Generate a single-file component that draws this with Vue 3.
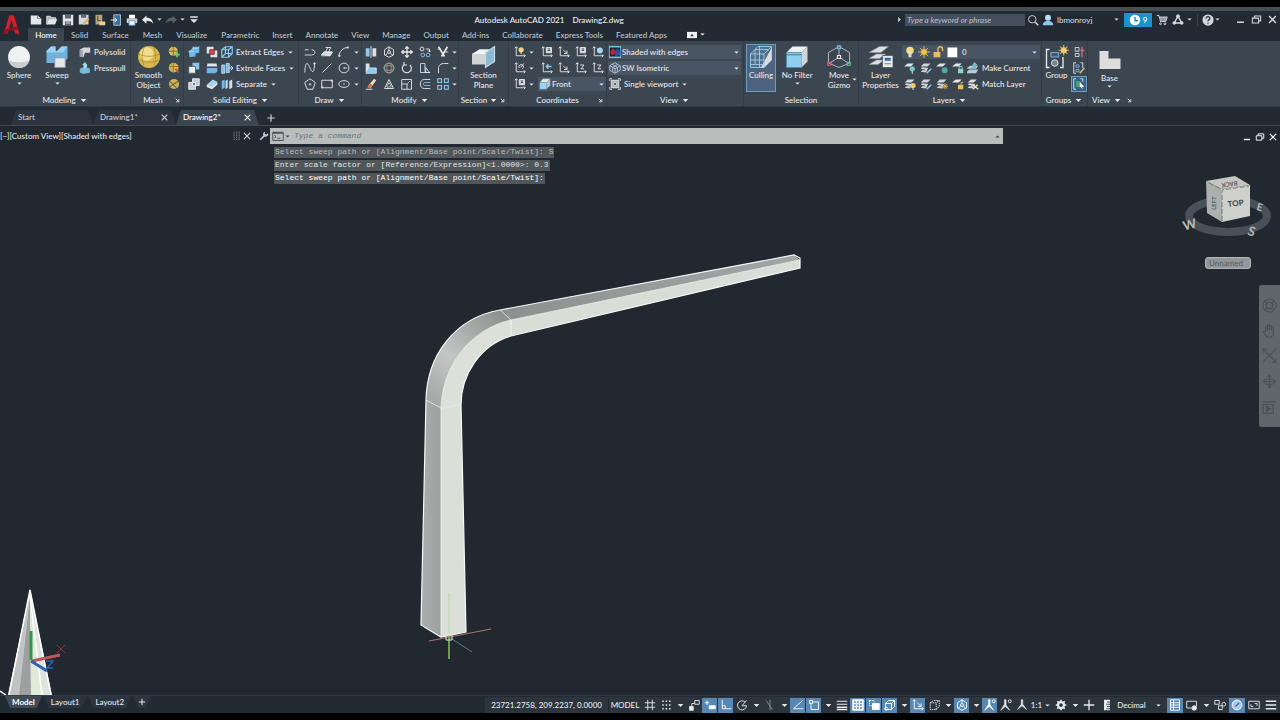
<script setup>
import { h } from 'vue'

const icons = {
  logo: '<path d="M2 15 6.4 1h3.4L14 15h-3.2L8 4.6 5 15z" fill="#d3202f" stroke="none"/><path d="M2 15 3 12 12 9.4l1 2.4-8 1.4L4.4 15z" fill="#8f1420" stroke="none"/>',
  newfile: '<path d="M1 2h9l5 4v8H1z" fill="#e4e7ea" stroke="none"/><path d="M10 2v4h5" stroke="#75808c"/>',
  open: '<path d="M1 14V3h5l1 2h6v2" fill="#aab2bb" stroke="#e4e7ea"/><path d="M1 14 4 7h11l-3 7z" fill="#e4e7ea" stroke="none"/>',
  save: '<path d="M1 1h14v14H1z" fill="#dfe3e7" stroke="none"/><path d="M4 1h8v5H4zM4 10h8v5H4z" fill="#5b6673" stroke="none"/><path d="M5.500 12h5"/>',
  saveas: '<path d="M1 1h13v13H1z" fill="#d2d7dc" stroke="none"/><path d="M4 1h7v4H4z" fill="#5b6673" stroke="none"/><path d="M7 14 14 6" stroke="#e0b15b" stroke-width="2.600"/>',
  webopen: '<path d="M2 1h9v13H2z" fill="#b9a77e" stroke="none"/><path d="M5 3v6h4" stroke="#3d3a33"/><path d="M7 10h8v5H7z" fill="#e9d092" stroke="none"/>',
  mobile: '<path d="M5 1h9v14H5z" fill="#3d6f99" stroke="#a9c6dc"/><path d="M1 8h8M6 5l3 3-3 3" stroke="#fff"/>',
  print: '<path d="M4 1h8v5H4z" fill="#fff" stroke="none"/><path d="M1 6h14v6H1z" fill="#cfd5da" stroke="none"/><path d="M4 9h8v6H4z" fill="#fff" stroke="#4f8fbf"/>',
  undo: '<path d="M6 2v3c5 0 8 2 9 8-2-3-5-4-9-4v4L0 7.500z" fill="currentColor" stroke="none"/>',
  redo: '<path d="M10 2v3c-5 0-8 2-9 8 2-3 5-4 9-4v4l6-5.500z" fill="#56616b" stroke="none"/>',
  custom: '<path d="M3 4h10" stroke-width="2"/><path d="m3 7 5 5 5-5z" fill="currentColor" stroke="none"/>',
  caret: '<path d="m3 5.500 5 5 5-5z" fill="currentColor" stroke="none"/>',
  right: '<path d="m5 2 6 6-6 6z" fill="currentColor" stroke="none"/>',
  launch: '<path d="m4 4 6 6M11 5v6H5" stroke-width="2"/>',
  search: '<circle cx="7" cy="7" r="5"/><path d="m11 11 4 4" stroke-width="2"/>',
  user: '<circle cx="8" cy="5" r="4" fill="#b9def5" stroke="none"/><path d="M1 15c0-8 14-8 14 0z" fill="#8dc4ea" stroke="none"/>',
  clock: '<circle cx="8" cy="8" r="7" fill="#fff" stroke="none"/><path d="M8 4v5h4" stroke="#1c8fc9" stroke-width="2"/>',
  cart: '<path d="M1 2h3l2 8h7l2-6H5" fill="#8f99a3"/><circle cx="6" cy="13" r="1.200"/><circle cx="12" cy="13" r="1.200"/>',
  share: '<path d="M8 3 3 12h10z" stroke-width="2"/><circle cx="8" cy="3" r="2" fill="currentColor"/><circle cx="3" cy="12" r="1.800" fill="currentColor"/><circle cx="13" cy="12" r="1.800" fill="currentColor"/>',
  help: '<circle cx="8" cy="8" r="7.500" fill="#d3d8dc" stroke="none"/><path d="M5.500 6c0-3.600 5-3.200 5-.4 0 2-2.500 2-2.500 4M8 11.500v1.500" stroke="#2a333d" stroke-width="1.800"/>',
  min: '<path d="M3 12h10" stroke-width="2.200"/>',
  restore: '<path d="M2 6h9v7H2zM5 6V3h9v7h-3" stroke-width="1.500"/>',
  close: '<path d="m3 3 10 10M13 3 3 13" stroke-width="2"/>',
  sphere: '<circle cx="8" cy="8" r="7.300" fill="#f0f2f2" stroke="none"/><path d="M1 10c2 2 12 2 14 0-1 7-13 7-14 0z" fill="#c9cdcf" stroke="none"/>',
  sweep: '<path d="M1 4 4 1h3v3h1l3-3h4v8l-3 3H1z" fill="#6db3e0" stroke="none"/><path d="m1 4 3-3h3v3h1l3-3h4l-3 4H1z" fill="#9bd0f2" stroke="none"/><path d="M6.500 8.500h7V15h-7z" fill="#e4e7ea" stroke="#8793a0" stroke-width=".6"/>',
  polysolid: '<path d="M1 14V5l5-3h9v7H8l-2 6z" fill="#d3d7da" stroke="none"/><path d="M1 14V5l4 1v9z" fill="#9aa3ac" stroke="none"/>',
  presspull: '<path d="m1 9 5-2 8 1 1 6-9 2-5-2z" fill="#79b9d8" stroke="none"/><path d="M6 8V4L4 4l4-4 3 4-1 4z" fill="#a4dced" stroke="none"/>',
  mesh: '<circle cx="8" cy="8" r="7.300" fill="#d9ba50" stroke="none"/><circle cx="6.500" cy="6" r="4.500" fill="#f1dd8a" stroke="none"/><path d="M1 6c4 2 10 2 14 0M1 10c5 2 9 2 14 0M5 1c-2 5-2 9 0 14M11 1c2 5 2 9 0 14" stroke="#a98b31" stroke-width=".5"/>',
  meshplus: '<circle cx="7" cy="7" r="6" fill="#d9bd59" stroke="none"/><path d="M1 7h12M7 1v12" stroke="#6f6438"/><path d="M12 8v7M8.500 11.500h7" stroke="#6ad36a" stroke-width="2.200"/>',
  meshminus: '<circle cx="7.500" cy="7.500" r="6.500" fill="#d6b352" stroke="none"/><path d="M2 6h12M7 1v12" stroke="#8a7030"/><path d="m10 9 4 5" stroke="#cc5a2c" stroke-width="2.500"/>',
  meshcrease: '<circle cx="8" cy="8" r="6.800" fill="#cdb25b" stroke="none"/><path d="M2 12 14 4M3 5l8 8" stroke="#6d6140" stroke-width="1.400"/>',
  union: '<path d="M1 7 6 3V1h9v8l-5 1v4l-8 1z" fill="#74b8e8" stroke="none"/><path d="M6 3h7l2-2M1 7h7" stroke="#b7dff7"/>',
  subtract: '<path d="M6 1h9v9H6z" fill="#8cc4ea" stroke="none"/><path d="M1 6h9v9H1z" fill="#eceff1" stroke="#56616d"/>',
  intersect: '<path d="M6 1h9v9H6zM1 6h9v9H1z" fill="#c4cad0" stroke="#eceff1"/><path d="M6 6h4v4H6z" fill="#3f86b9"/>',
  interfere: '<path d="M1 1h9v9H1zM6 6h9v9H6z" fill="#dfe3e6" stroke="none"/><path d="M5 5h6v6H5z" fill="#d54c55" stroke="#8d2430"/>',
  slice: '<path d="M2 2h12l1 4H1z" fill="#dce4ea" stroke="none"/><path d="M1 8h14v5l-3 2H1z" fill="#73b5e3" stroke="none"/>',
  shell: '<path d="m1 9 8-7 6 3-7 8z" fill="#a4d2ef" stroke="none"/><path d="m1 9 7 3v3l-7-3zM8 12l7-7v4l-7 6z" fill="#e1e6ea" stroke="none"/>',
  edges: '<path d="M1 5h9v10H1zM1 5l5-4h9v9l-5 5M10 5l5-4M6 1v9h9M6 10l-5 5" stroke="#8dccf4" stroke-width="1.500"/>',
  extrude: '<path d="M1 4h4v11H1zM7 2h4v12H7z" fill="#79bae7" stroke="#b5dcf5"/><path d="M10 8h6M13 5l3 3-3 3" stroke="#e8edf0"/>',
  separate: '<path d="m1 4 4-2v11l-4 2z" fill="#74b8e8" stroke="none"/><path d="m6 4 3-2v11l-3 2z" fill="#b7dff7" stroke="none"/><path d="m11 4 4-2v11l-4 2z" fill="#d6dde2" stroke="none"/>',
  pline: '<path d="M1 12h9c6 0 6-7 0-7M1 5h5"/>',
  planar: '<path d="m1 11 3-3h11l-3 5H1zM6 8l3-6M6 2h7l-3 6"/><path d="m1 11 3-3h11l-3 5z" fill="#d5dade"/>',
  arc: '<path d="M1 14C2 7 7 2 13 2"/><circle cx="2" cy="13" r="1"/><circle cx="13" cy="2" r="1"/>',
  spline: '<path d="M1 14C2-5 6 3 8 8s6 10 6-7"/><circle cx="14" cy="2" r="1"/>',
  line: '<path d="M2 14 14 2"/>',
  circle: '<circle cx="8" cy="8" r="6.500"/><path d="M8 8h4"/><circle cx="8" cy="8" r=".5"/>',
  polygon: '<path d="m8 1 7 5-3 9H4L1 6z"/><circle cx="8" cy="8.500" r="1"/>',
  rect: '<path d="M1 3h14v10H1z"/><circle cx="1.500" cy="12.500" r="1"/><circle cx="14.500" cy="3.500" r="1"/>',
  ellipse: '<ellipse cx="8" cy="8" rx="7" ry="4.500"/><circle cx="8" cy="8" r=".5"/>',
  mirror: '<path d="M1 3h5v11H1z" fill="#8dc9ee" stroke="none"/><path d="M10 3h5v11h-5z" fill="#dce1e5" stroke="none"/><path d="M8 0v16"/>',
  gizmo: '<path d="m8 1 6 4v7l-6 3-6-3V5z"/><circle cx="8" cy="8" r="2"/><path d="M8 1v5M3 12l3-2M13 12l-3-2"/>',
  move: '<path d="M8 1v14M1 8h14M5.500 3.500 8 1l2.500 2.500M5.500 12.500 8 15l2.500-2.500M3.500 5.500 1 8l2.500 2.500M12.500 5.500 15 8l-2.500 2.500" stroke-width="1.700"/>',
  copy: '<circle cx="4" cy="4" r="2.500"/><path d="M9 4h5v4M12 6l2 2 2-2"/><circle cx="5" cy="12" r="2.500" stroke="#8cc4ea"/><circle cx="12" cy="12" r="2.500" stroke="#8cc4ea"/>',
  trim: '<path d="m2 1 8 13M14 1 6 14" stroke-width="2.200"/><path d="M1 4h4M10 8h5"/>',
  align: '<path d="M1 2h5v12H1z" fill="#dfe3e7" stroke="none"/><path d="M5 8h10v7H1" fill="#8dc9ee" stroke="#cde6f5"/>',
  rotate3d: '<circle cx="8" cy="8" r="6.500" stroke="#b6c8bf"/><ellipse cx="8" cy="8" rx="3" ry="6.500" stroke="#c77"/><ellipse cx="8" cy="8" rx="6.500" ry="3" stroke="#7ba886"/>',
  rotate: '<path d="M5 3A6 6 0 1 0 12 4M4 0v4h4" stroke-width="1.500"/>',
  stretch: '<path d="M2 2h6v12H2zM8 6l6 8H2" stroke="#c5d8e4"/><path d="M9 8v6h6"/>',
  fillet: '<path d="M2 15V9c0-5 3-7 8-7h5"/>',
  erase: '<path d="m4 11 8-10 3 2-8 11z" fill="#f1dfbf" stroke="none"/><path d="m3 12 4-5 3 3-4 4z" fill="#d9703d" stroke="none"/><path d="M1 15h9"/>',
  scale3d: '<path d="m8 2 6 12H2z"/><path d="m8 6 3 6H5z" stroke="#b5c8be"/>',
  scale: '<path d="M1 2h13v13H1zM1 8h7v7"/><path d="m8 8 4-4" stroke="#8cc4ea"/>',
  offset: '<path d="M15 2H7c-7 0-7 12 0 12h8"/><path d="M15 6H8c-3 0-3 4 0 4h7" stroke="#8cc4ea"/>',
  array: '<path d="M1 1h5v5H1zM10 1h5v5h-5zM1 10h5v5H1zM10 10h5v5h-5z" stroke="#8dc9ee" stroke-width="1.500"/>',
  section: '<path d="M0 6 5 3h6v10H0z" fill="#d0d4d7" stroke="none"/><path d="m0 6 5-3h7l-3 3z" fill="#f2f4f5" stroke="none"/><path d="M9 5 15 1v10l-6 4z" fill="#8bb9d2" stroke="#c3dbe8" stroke-width=".8"/>',
  ucs: '<path d="M3 1v12h12M1 3l2-2 2 2M13 11l2 2-2 2"/>',
  ucstilt: '<path d="M3 1v12h12M1 3l2-2 2 2M13 11l2 2-2 2M7 5l5 5M12 6v4H8"/>',
  ucsname: '<path d="M3 1v12h12M1 3l2-2 2 2M13 11l2 2-2 2"/><path d="M7 2h7v7H7z" fill="#cfd5da"/><path d="M9 4h3M9 6h3" stroke="#3b4551"/>',
  ucsworld: '<path d="M3 1v12h12M1 3l2-2 2 2M13 11l2 2-2 2"/><circle cx="10.500" cy="6" r="4" fill="#a8d4ee" stroke="none"/>',
  ucslight: '<path d="M3 1v12h12M1 3l2-2 2 2M13 11l2 2-2 2"/><circle cx="9.500" cy="5" r="3.500" fill="#eed679" stroke="none"/><path d="M9.500 8v3"/>',
  ucsarrow: '<path d="M3 1v12h12M1 3l2-2 2 2M13 11l2 2-2 2"/><path d="M14 6H7m3-3L7 6l3 3" stroke="#8dc9ee" stroke-width="1.800"/>',
  ucsrot: '<path d="M3 1v12h12M1 3l2-2 2 2M13 11l2 2-2 2"/><path d="M7 8a3 3 0 1 1 4 1M13 2l-4 5"/>',
  ucsz: '<path d="M3 1v12h12M1 3l2-2 2 2M13 11l2 2-2 2"/><path d="M7 4h5L8 9h4"/>',
  cube: '<path d="M1 6h9v9H1z" fill="#9cd7f1" stroke="#5c8faa" stroke-width=".6"/><path d="m1 6 4-5h10l-5 5z" fill="#e5eaed" stroke="#5c7b8c" stroke-width=".6"/><path d="m10 6 5-5v9l-5 5z" fill="#b8c2c9" stroke="none"/>',
  shaded: '<path d="M0 1h16v14H0z" fill="#17243a" stroke="#6fc2dd" stroke-width="2"/><path d="M2 9c0-4 4-6 4-6s2 3 2 6-5 5-6 0z" fill="#c3262f" stroke="none"/><path d="m8 6 3-3 4 4v6H8z" fill="#2552a8" stroke="none"/>',
  iso: '<path d="m8 1 7 4v6l-7 4-7-4V5zM1 5l7 4 7-4M8 9v6M4 3l7 4v6M12 3 5 7v6" stroke="#b8cad8"/>',
  viewport: '<path d="M3 3h10v10H3z" fill="#aab2ba"/><path d="M1 4V1h3M12 1h3v3M15 12v3h-3M4 15H1v-3"/><circle cx="8" cy="8" r="2.500" fill="#566170"/>',
  culling: '<path d="m1 6 5-5h9v9l-5 5H1z" fill="#4f718e" stroke="#9fcbea" stroke-width=".6"/><path d="m8 15 7-13v8l-5 5z" fill="#d9dddf" stroke="none"/><path d="M1 6h9V15M10 6l5-5M4 3v10M7 1v14M1 10h9M1 13h8M4 3h9" stroke="#9fcbea" stroke-width=".6"/>',
  nofilter: '<path d="m1 5 4-4h10l-4 4z" fill="#eef1f2" stroke="none"/><path d="M1 5h10v10H1z" fill="#8fd0f0" stroke="#4d88a8" stroke-width=".5"/><path d="m11 5 4-4v10l-4 4z" fill="#d0d5d8" stroke="none"/><path d="M1 6.500h10" stroke="#34657f" stroke-width=".6"/>',
  movegizmo: '<path d="m8 1 7 4v7l-7 3-7-3V5zM8 8V2M8 8l-6 4M8 8l6 4" stroke="#b9c2cb" stroke-width=".6"/><path d="M7 .5h2v2H7z" stroke="#70b9ea" stroke-width=".8"/><path d="M.5 11.500h2v2h-2z" stroke="#df5c6e" stroke-width=".8"/><path d="M13.500 11.500h2v2h-2z" stroke="#59c97c" stroke-width=".8"/><path d="M7 7h2v2H7z" fill="#3c4651" stroke-width=".8"/>',
  layerprops: '<path d="m0 5 7-4h6L8 5zM0 9l5-3h6L7 9zM0 13l5-3h5l-4 3z" fill="#dde0e2" stroke="#8c969f" stroke-width=".4"/><path d="M9 7h7v8H9z" fill="#e8ebed" stroke="#4d5a66" stroke-width=".5"/><path d="M10.500 8.500h4v2h-4z" fill="#356f9d" stroke="none"/><path d="M10.500 12.500h4" stroke="#667380" stroke-width=".6"/>',
  bulb: '<circle cx="8" cy="6" r="5" fill="#f2dc8c" stroke="none"/><path d="M6 10h4v5H6z" fill="#d9dde0" stroke="none"/>',
  sun: '<circle cx="8" cy="8" r="4" fill="#f0c04e" stroke="none"/><path d="M8 0v16M0 8h16M2.500 2.500l11 11M13.500 2.500l-11 11" stroke="#f0c04e"/>',
  unlock: '<path d="M2 8h9v7H2z" fill="#e6bf5a" stroke="none"/><path d="M8 8V4c0-4 6-4 6 0v3" stroke="#e6bf5a" stroke-width="1.800"/>',
  white: '<path d="M2 2h13v13H2z" fill="#fff" stroke="none"/>',
  layerfreeze: '<path d="m0 6 5-4h8L9 6z" fill="#e1e5e8" stroke="none"/><circle cx="11" cy="9" r="3.500" fill="#6fc9c5" stroke="none"/><path d="M11 12v4"/>',
  layeredit: '<path d="m1 6 4-4h9l-4 4zM1 9l2-2 8 1-2 3zM1 13l2-2h7l-2 3z" fill="#cfd5da" stroke="none"/><path d="m9 15 6-6" stroke="#8ec5e6" stroke-width="2"/>',
  layerblue: '<path d="m0 6 5-4h8L9 6z" fill="#e1e5e8" stroke="none"/><circle cx="11.500" cy="11" r="4" fill="#4caaa7" stroke="none"/>',
  layerlock: '<path d="m0 6 5-4h8L9 6z" fill="#e1e5e8" stroke="none"/><path d="M8 9h7v6H8z" fill="#8dd6c6" stroke="none"/><path d="M9.500 9V6h4v3" stroke="#8dd6c6"/>',
  layeryellow: '<path d="m1 6 4-4h9l-4 4zM1 9l2-2 8 1-2 3zM1 13l2-2h7l-2 3z" fill="#cfd5da" stroke="none"/><circle cx="12" cy="10" r="3.500" fill="#f0cb68" stroke="none"/><path d="M12 13v3"/>',
  layersun: '<path d="m1 6 4-4h9l-4 4zM1 9l2-2 8 1-2 3zM1 13l2-2h7l-2 3z" fill="#cfd5da" stroke="none"/><path d="M12 7v8M8 11h8M9 8l6 6M15 8l-6 6" stroke="#f0b94f"/>',
  layerunlock: '<path d="m0 6 5-4h8L9 6z" fill="#e1e5e8" stroke="none"/><path d="M8 9h7v6H8z" fill="#e6bf5a" stroke="none"/><path d="M12 9V6h3" stroke="#e6bf5a"/>',
  current: '<path d="m0 8 4-3h11l-3 4H0zM0 13l3-3h12l-3 5H0z" fill="#b8cdd2" stroke="none"/><path d="M7 9V4L10 0l4 4-2 1v4z" fill="#74bcc9" stroke="none"/>',
  match: '<path d="m1 6 4-4h8l-4 4zM1 9l2-2 8 1-2 3zM1 13l2-2h7l-2 3z" fill="#d9dde0" stroke="none"/><path d="m8 9 7 6M14 9l-6 6" stroke="#e9dfb4" stroke-width="2"/>',
  group: '<path d="M3 3H1v12h2M10 15h2V8" stroke-width=".9"/><path d="M4 5h5v3H4z" fill="#3d5c78" stroke="#78a9cf" stroke-width=".8"/><circle cx="6.500" cy="12" r="2.200" fill="#7a858e" stroke-width=".6"/><path d="M12.500 0v7M9 3.500h7M10 1l5 5M15 1l-5 5" stroke="#f0b955" stroke-width=".7"/><circle cx="12.500" cy="3.500" r="2" fill="#f4cd73" stroke="none"/>',
  ungroup: '<path d="M3 2h5v5H3zM3 10h5v4H3z" stroke="#d5dce2"/><path d="M12 1v14M10 6h5" stroke="#e06b76" stroke-width="1.700"/>',
  groupedit: '<path d="M4 1H1v14h3M10 1h3v7"/><path d="M4 4h4v3H4zM4 10h4v3H4z" stroke="#7fb3da"/><path d="m9 15 6-7" stroke="#e2bc66" stroke-width="2"/>',
  groupsel: '<path d="M4 1H1v14h3M10 1h3v4"/><path d="M4 4h5v8H4z" fill="#3fa772" stroke="none"/><path d="m9 5 6 7h-3l1 3-3-3H9z" fill="#fff" stroke="none"/>',
  base: '<path d="M1 2h6v5h8v7H1z" fill="#dcdddc" stroke="none"/>',
  plus: '<path d="M8 3v10M3 8h10" stroke-width="1.600"/>',
  grip: '<path d="M5 1v14M9 1v14M13 1v14" stroke-dasharray="1.500 1.500"/>',
  wrench: '<path d="m2 14 7-7" stroke-width="2.600"/><path d="M14 3a4 4 0 1 1-4-2L9 4l3 2z" fill="currentColor" stroke="none"/>',
  prompt: '<path d="M1 3h14v11H1z" stroke="#454c50"/><path d="M1 4h14" stroke="#454c50" stroke-width="2"/><path d="m3 7 2.500 2L3 11M7 11h4" stroke="#454c50"/>',
  pill: '<path d="M0 3h16v10H0z" fill="#f0f2f3" stroke="none"/><path d="m5 10 3-4 3 4z" fill="#333d48" stroke="none"/>',
  grid: '<path d="M5 1v14M11 1v14M1 5h14M1 11h14"/>',
  snap: '<path d="M3 3h11M3 8h11M3 13h11" stroke-width="1.800" stroke-dasharray="2 2.500"/>',
  infer: '<path d="M2 10h5v5H2z" fill="currentColor"/><path d="M5 10V6h4M9 2h6v5H9z"/>',
  dyn: '<path d="M1 5h6M4 2v6"/><path d="M7 9h8v4H7z" fill="currentColor"/>',
  ortho: '<path d="M3 1v12h12M3 9h4v4"/>',
  polar: '<path d="M12 4a6 6 0 1 0 2 5H8l6-7"/>',
  isodraft: '<path d="M8 1v14M3 2l8 12" stroke="#87939e"/>',
  track: '<path d="M14 2 2 13h13"/>',
  osnap: '<path d="M4 4h10v10H4z"/><path d="M2 2h4v4H2z" fill="#5f93bf"/>',
  lwt: '<path d="M1 3h14M1 7h14" stroke-width="1.500"/><path d="M1 11h14M1 14h14" stroke-width="2"/>',
  transp: '<path d="M1 1h14v14H1z" fill="#eef4f8"/><path d="M3 4h11M3 8h11M3 12h11" stroke="#46759b" stroke-width="2" stroke-dasharray="2 2"/>',
  cycle: '<path d="M6 6h9v8H6z" fill="#fff"/><path d="M2 2h6v4M2 2v7h4" stroke-dasharray="2 1"/>',
  osnap3d: '<path d="M2 6h8v8H2zM2 6l4-4h8l-4 4M14 2v8l-4 4"/><circle cx="3" cy="13" r="2"/>',
  filter: '<path d="M3 5h8v9H3zM3 5l4-3h8l-4 3M15 2v8l-4 4" stroke-dasharray="2 1"/>',
  annot: '<path d="m2 14 6-5 6 5-5-7V1H7v6z" fill="currentColor" stroke-width=".8"/>',
  annotvis: '<path d="m1 15 6-5 6 5-5-7V1H6v6z" fill="currentColor" stroke-width=".8"/><circle cx="13" cy="3" r="2"/>',
  gear: '<circle cx="8" cy="8" r="4" stroke-width="3"/><path d="M8 1v3M8 12v3M1 8h3M12 8h3M3 3l2 2M11 11l2 2M13 3l-2 2M5 11l-2 2" stroke-width="2.200"/>',
  bigplus: '<path d="M8 1v14M1 8h14" stroke-width="1.800"/>',
  ruler: '<path d="M4 1h8v14H4z" fill="currentColor" stroke="none"/><path d="M8 4h4M7 7h5M8 10h4M7 13h5" stroke="#333d47"/>',
  quick: '<path d="M2 1h12v14H2zM2 5h12M2 8h12M2 11h12M6 1v14"/>',
  monitor: '<path d="M1 3h13v7M1 3v9h7"/><circle cx="11" cy="12" r="3" fill="currentColor"/>',
  isolate: '<path d="M1 2h6v5H1zM6 9h5v5H6z"/><circle cx="13" cy="7" r="2.500"/>',
  perf: '<circle cx="8" cy="8" r="6.500" fill="#a9cbe3"/><path d="m6 10 5-5" stroke="#466f91" stroke-width="2"/>',
  clean: '<path d="M1 3h14v10H1zM9 6h3v3M7 10H4V7"/>',
  menu: '<path d="M1 3h14M1 8h14M1 13h14" stroke-width="1.800"/>',
  wheel: '<circle cx="8" cy="8" r="7"/><circle cx="8" cy="8" r="3.500"/><path d="m3 3 3 3M13 3l-3 3M3 13l3-3M13 13l-3-3"/>',
  pan: '<path d="M4 9V4h2v4-6h2v6-5h2v5-3h2v6c0 5-7 6-9 1L1 9z"/>',
  zoom: '<path d="m1 1 14 14M15 1 1 15M1 5V1h4M15 11v4h-4"/>',
  orbit: '<path d="M8 1v14M1 8h14M6 3l2-2 2 2M6 13l2 2 2-2"/><ellipse cx="8" cy="8" rx="6" ry="3"/>',
  motion: '<path d="M1 3h14M1 6h11v9H1z"/><path d="m5 8 4 2.500L5 13z" fill="currentColor"/>'
}

const Icon = (props) =>
  h('svg', {
    viewBox: '0 0 16 16',
    fill: 'none',
    stroke: 'currentColor',
    'stroke-width': 1.2,
    'aria-hidden': 'true',
    innerHTML: icons[props.n]
  })
Icon.props = ['n']

const quick = ['newfile', 'open', 'save', 'saveas', 'webopen', 'mobile', 'print', 'undo']
const menu = ['Home', 'Solid', 'Surface', 'Mesh', 'Visualize', 'Parametric', 'Insert', 'Annotate', 'View', 'Manage', 'Output', 'Add-ins', 'Collaborate', 'Express Tools', 'Featured Apps']
const solids = ['union', 'interfere', 'subtract', 'slice', 'intersect', 'shell']
const solidOps = [['edges', 'Extract Edges'], ['extrude', 'Extrude Faces'], ['separate', 'Separate']]
const draw = ['pline', 'planar', 'arc', 'spline', 'line', 'circle', 'polygon', 'rect', 'ellipse']
const modify = ['mirror', 'gizmo', 'move', 'copy', 'trim', 'align', 'rotate3d', 'rotate', 'stretch', 'fillet', 'erase', 'scale3d', 'scale', 'offset', 'array']
const coordA = ['ucslight', 'ucsrot', 'ucsname']
const coordB = ['ucsname', 'ucstilt', 'ucsname', 'ucsworld', 'ucsarrow', 'ucstilt', 'ucsz', 'ucsz']
const layersA = ['layerfreeze', 'layeredit', 'layerblue', 'layerlock']
const layersB = ['layeryellow', 'layeredit', 'layersun', 'layerunlock']
const status = [
  ['grid'], ['snap'], ['caret'], ['infer'], ['dyn', 1], ['ortho', 1], ['polar'], ['caret'], ['isodraft'], ['caret'],
  ['track', 1], ['osnap', 1], ['caret'], ['lwt'], ['transp', 1], ['cycle', 1], ['osnap3d', 1], ['caret'],
  ['ucstilt', 1], ['filter'], ['caret'], ['gizmo', 1], ['caret'], ['annotvis', 1], ['annotvis'], ['annot']
]
const statusEnd = [['quick', 1], ['monitor'], ['caret'], ['isolate'], ['perf', 1], ['clean'], ['menu']]
</script>

<template>
  <div class="app">
    <div class="edge"></div>
    <header class="head">
      <button class="logo" aria-label="Application menu"><Icon n="logo" /></button>
      <div class="titlebar">
        <div class="quick">
          <button v-for="q in quick" :key="q" :aria-label="q"><Icon :n="q" /></button>
          <Icon n="caret" class="caret" />
          <button aria-label="redo"><Icon n="redo" /></button>
          <Icon n="caret" class="caret" />
          <button aria-label="Customize"><Icon n="custom" /></button>
        </div>
        <div class="title"><span>Autodesk AutoCAD 2021</span><span>Drawing2.dwg</span></div>
        <div class="account">
          <Icon n="right" class="caret" />
          <input class="find" aria-label="Search" placeholder="Type a keyword or phrase" />
          <button aria-label="Search"><Icon n="search" /></button>
          <button class="user"><Icon n="user" />lbmonroyj</button>
          <Icon n="caret" class="caret" />
          <button class="trial"><Icon n="clock" />9</button>
          <button aria-label="Store"><Icon n="cart" /></button>
          <button aria-label="Apps"><Icon n="share" /></button>
          <Icon n="caret" class="caret" />
          <button class="help" aria-label="Help"><Icon n="help" /></button>
          <Icon n="caret" class="caret" />
          <div class="win">
            <button aria-label="Minimize"><Icon n="min" /></button>
            <button aria-label="Restore"><Icon n="restore" /></button>
            <button aria-label="Close"><Icon n="close" /></button>
          </div>
        </div>
      </div>
      <nav class="menu">
        <button v-for="(m, i) in menu" :key="m" :class="{ on: i === 0 }">{{ m }}</button>
        <button class="pill" aria-label="Ribbon display"><Icon n="pill" /><Icon n="caret" class="caret" /></button>
      </nav>
    </header>

    <main class="ribbon">
      <section class="panel modeling">
        <div class="body">
          <button class="big"><Icon n="sphere" />Sphere<Icon n="caret" class="caret" /></button>
          <button class="big"><Icon n="sweep" />Sweep<Icon n="caret" class="caret" /></button>
          <div class="stack">
            <button class="item"><Icon n="polysolid" />Polysolid</button>
            <button class="item"><Icon n="presspull" />Presspull</button>
          </div>
        </div>
        <h2>Modeling<Icon n="caret" class="caret" /></h2>
      </section>
      <section class="panel mesh">
        <div class="body">
          <button class="big"><Icon n="mesh" /><span>Smooth<br />Object</span></button>
          <div class="stack">
            <button v-for="m in ['meshplus', 'meshminus', 'meshcrease']" :key="m" class="tool" :aria-label="m"><Icon :n="m" /></button>
          </div>
        </div>
        <h2>Mesh<Icon n="launch" class="launch" /></h2>
      </section>
      <section class="panel solids">
        <div class="body">
          <div class="tools two">
            <button v-for="s in solids" :key="s" class="tool" :aria-label="s"><Icon :n="s" /></button>
          </div>
          <div class="stack">
            <button v-for="s in solidOps" :key="s[0]" class="item"><Icon :n="s[0]" />{{ s[1] }}<Icon n="caret" class="caret" /></button>
          </div>
        </div>
        <h2>Solid Editing<Icon n="caret" class="caret" /></h2>
      </section>
      <section class="panel draw">
        <div class="body">
          <div class="tools three">
            <button v-for="d in draw" :key="d" class="tool" :aria-label="d"><Icon :n="d" /></button>
          </div>
          <div class="carets"><Icon v-for="i in 3" :key="i" n="caret" class="caret" /></div>
        </div>
        <h2>Draw<Icon n="caret" class="caret" /></h2>
      </section>
      <section class="panel modify">
        <div class="body">
          <div class="tools five">
            <button v-for="d in modify" :key="d" class="tool" :aria-label="d"><Icon :n="d" /></button>
          </div>
          <div class="carets"><Icon v-for="i in 3" :key="i" n="caret" class="caret" /></div>
        </div>
        <h2>Modify<Icon n="caret" class="caret" /></h2>
      </section>
      <section class="panel section">
        <div class="body">
          <button class="big"><Icon n="section" /><span>Section<br />Plane</span></button>
        </div>
        <h2>Section<Icon n="caret" class="caret" /><Icon n="launch" class="launch" /></h2>
      </section>
      <section class="panel coords">
        <div class="body">
          <div class="stack">
            <button v-for="(c, i) in coordA" :key="i" class="item" :aria-label="'UCS ' + c"><Icon :n="c" /><Icon n="caret" class="caret" /></button>
          </div>
          <div class="stack">
            <div class="tools four">
              <button v-for="(c, i) in coordB" :key="i" class="tool" :aria-label="c"><Icon :n="c" /></button>
            </div>
            <div class="field">
              <Icon n="cube" /><select aria-label="UCS orientation"><option>Front</option></select><Icon n="caret" class="caret" />
            </div>
          </div>
        </div>
        <h2>Coordinates<Icon n="launch" class="launch" /></h2>
      </section>
      <section class="panel view">
        <div class="body">
          <div class="stack">
            <div class="field"><Icon n="shaded" /><select aria-label="Visual style"><option>Shaded with edges</option></select><Icon n="caret" class="caret" /></div>
            <div class="field"><Icon n="iso" /><select aria-label="Named view"><option>SW Isometric</option></select><Icon n="caret" class="caret" /></div>
            <button class="item"><Icon n="viewport" />Single viewport<Icon n="caret" class="caret" /></button>
          </div>
        </div>
        <h2>View<Icon n="caret" class="caret" /></h2>
      </section>
      <section class="panel selection">
        <div class="body">
          <button class="big on"><Icon n="culling" />Culling</button>
          <button class="big"><Icon n="nofilter" />No Filter<Icon n="caret" class="caret" /></button>
          <button class="big"><Icon n="movegizmo" /><span>Move<br />Gizmo</span></button>
          <div class="carets end"><Icon n="caret" class="caret" /></div>
        </div>
        <h2>Selection</h2>
      </section>
      <section class="panel layers">
        <div class="body">
          <button class="big"><Icon n="layerprops" /><span>Layer<br />Properties</span></button>
          <div class="stack">
            <div class="field">
              <Icon n="bulb" /><Icon n="sun" /><Icon n="unlock" /><Icon n="white" />
              <select aria-label="Layer"><option>0</option></select><Icon n="caret" class="caret" />
            </div>
            <div class="row">
              <button v-for="l in layersA" :key="l" class="tool" :aria-label="l"><Icon :n="l" /></button>
              <button class="item"><Icon n="current" />Make Current</button>
            </div>
            <div class="row">
              <button v-for="l in layersB" :key="l" class="tool" :aria-label="l"><Icon :n="l" /></button>
              <button class="item"><Icon n="match" />Match Layer</button>
            </div>
          </div>
        </div>
        <h2>Layers<Icon n="caret" class="caret" /></h2>
      </section>
      <section class="panel groups">
        <div class="body">
          <button class="big"><Icon n="group" />Group</button>
          <div class="stack">
            <button class="tool" aria-label="Ungroup"><Icon n="ungroup" /></button>
            <button class="tool" aria-label="Group edit"><Icon n="groupedit" /></button>
            <button class="tool on" aria-label="Group selection"><Icon n="groupsel" /></button>
          </div>
        </div>
        <h2>Groups<Icon n="caret" class="caret" /></h2>
      </section>
      <section class="panel base">
        <div class="body">
          <button class="big"><Icon n="base" />Base<Icon n="caret" class="caret" /></button>
        </div>
        <h2>View<Icon n="caret" class="caret" /><Icon n="launch" class="launch" /></h2>
      </section>
    </main>

    <nav class="files">
      <button class="file start">Start</button>
      <div class="file"><button>Drawing1*</button><button aria-label="Close Drawing1"><Icon n="close" /></button></div>
      <div class="file on"><button>Drawing2*</button><button aria-label="Close Drawing2"><Icon n="close" /></button></div>
      <button class="add" aria-label="New drawing"><Icon n="plus" /></button>
    </nav>

    <div class="viewport">
      <svg class="scene" viewBox="0 127 1280 568" preserveAspectRatio="xMinYMax meet" aria-hidden="true">
        <defs>
          <linearGradient id="arm" x1="500" y1="315" x2="800" y2="258" gradientUnits="userSpaceOnUse">
            <stop offset="0" stop-color="#8d908f" /><stop offset="1" stop-color="#a3a6a4" />
          </linearGradient>
          <linearGradient id="bend" x1="430" y1="400" x2="505" y2="315" gradientUnits="userSpaceOnUse">
            <stop offset="0" stop-color="#a4a7a6" /><stop offset=".4" stop-color="#c3c6c3" /><stop offset="1" stop-color="#8d908f" />
          </linearGradient>
          <linearGradient id="post" x1="421" y1="0" x2="443" y2="0" gradientUnits="userSpaceOnUse">
            <stop offset="0" stop-color="#aaaead" /><stop offset="1" stop-color="#999d9c" />
          </linearGradient>
        </defs>
        <g stroke="none">
          <path d="M500 310 794 255 800 260 511 320z" fill="url(#arm)" />
          <path d="M511 320 800 260V268L511 336z" fill="#d9ddd5" />
          <path d="M426 400C427 355 455 318 500 310L511 320C468 330 442 368 441 408z" fill="url(#bend)" />
          <path d="M441 408C442 368 468 330 511 320V336C480 345 461 375 461 405z" fill="#dce0d8" />
          <path d="M426 400 441 408V637L421 625z" fill="url(#post)" />
          <path d="M441 408 461 405 466 632 441 637z" fill="#dadfd7" />
        </g>
        <g fill="none" stroke="#f7f9f7">
          <path d="M421 625 426 400C427 355 455 318 500 310L794 255 800 258V268L511 336C480 345 461 375 461 405L466 632 441 637z" stroke-width="1.200" />
          <path d="M441 637V408C442 368 468 330 511 320L800 260M426 400 441 408 461 405M500 310 511 320V336" stroke-width=".8" />
        </g>
        <path d="M429 641 491 629" stroke="#b0756d" /><path d="M449 637 472 652" stroke="#5d7797" />
        <path d="M449 593V637" stroke="#b5d69d" /><path d="M449 637V659" stroke="#6f9f4c" stroke-width="2" />
        <path d="M446 634h6v6h-6z" fill="none" stroke="#e2eadb" />
        <path d="M30 590 8 695H52z" fill="#dfe2df" />
        <path d="M30 590 8 695H19z" fill="#c0c3c2" /><path d="M30 595 19 695H31z" fill="#9da09f" /><path d="M30 595 31 695H42z" fill="#e0ead8" />
        <path d="M9 695 30 590 51 695M30 597 42 695M0 691 6 695" fill="none" stroke="#fff" stroke-width="1.500" />
        <path d="M31 631V660" stroke="#38924a" stroke-width="3" />
        <path d="M32 661 60 655" stroke="#b9575c" stroke-width="3" />
        <path d="M31 661 47 671" stroke="#2c63ac" stroke-width="3" />
        <path d="m57 645 8 8M65 645l-8 8" stroke="#a52b35" /><path d="M46 661h7l-6 7h6" fill="none" stroke="#2c63ac" stroke-width="1.500" />
      </svg>

      <div class="top">
        <span class="vlabel">[−][Custom View][Shaded with edges]</span>
        <div class="cmdtools">
          <Icon n="grip" />
          <button aria-label="Close command line"><Icon n="close" /></button>
          <button aria-label="Customize command line"><Icon n="wrench" /></button>
        </div>
        <div class="command">
          <div class="cmdbar">
            <Icon n="prompt" /><Icon n="caret" class="caret" />
            <input aria-label="Command" placeholder="Type a command" />
            <Icon n="caret" class="caret up" />
          </div>
          <p class="old"><span>Select sweep path or [Alignment/Base point/Scale/Twist]: S</span></p>
          <p><span>Enter scale factor or [Reference/Expression]&lt;1.0000&gt;: 0.3</span></p>
          <p class="now"><span>Select sweep path or [Alignment/Base point/Scale/Twist]:</span></p>
        </div>
        <div class="docwin">
          <button aria-label="Minimize drawing"><Icon n="min" /></button>
          <button aria-label="Restore drawing"><Icon n="restore" /></button>
          <button aria-label="Close drawing"><Icon n="close" /></button>
        </div>
      </div>

      <div class="cube">
        <svg viewBox="0 0 92 72" role="img" aria-label="View cube">
          <ellipse cx="46" cy="44" rx="39" ry="16" fill="none" stroke="#485059" stroke-width="8" />
          <path d="m24 9 29-5 15 9-29 4z" fill="#c4c5c2" /><path d="m24 9 15 8 1 33-15-9z" fill="#aeb0ae" /><path d="m39 17 29-4v31l-28 6z" fill="#cfd0cc" />
          <path d="M40 49V18l27-4M27 11l12 6" fill="none" stroke="#777b7b" stroke-dasharray="5 2" />
          <text x="46" y="35" font-size="8" font-weight="700" fill="#3c4145" transform="rotate(-7 46 35)">TOP</text>
          <text x="34" y="38" font-size="6" font-weight="700" fill="#555a5c" transform="rotate(-88 34 38)">LEFT</text>
          <text x="55" y="7" font-size="6" font-weight="700" fill="#555a5c" transform="rotate(172 55 8)">BACK</text>
          <g font-size="13" font-weight="700" fill="#b4b8ba">
            <text x="1" y="57" transform="rotate(-15 8 53)">W</text><text x="66" y="64" transform="rotate(20 70 60)">S</text>
            <text x="75" y="39" font-size="10" transform="rotate(15 79 35)">E</text>
          </g>
        </svg>
        <button>Unnamed</button>
      </div>

      <aside class="navbar">
        <button v-for="n in ['wheel', 'pan', 'zoom', 'orbit', 'motion']" :key="n" :aria-label="n"><Icon :n="n" /></button>
      </aside>
    </div>

    <footer class="foot">
      <nav class="layouts">
        <button class="on">Model</button><button>Layout1</button><button>Layout2</button>
        <button aria-label="New layout"><Icon n="plus" /></button>
      </nav>
      <div class="status">
        <span class="xyz">23721.2758, 209.2237, 0.0000</span>
        <button class="space">MODEL</button>
        <button v-for="(s, i) in status" :key="i" :class="{ on: s[1], drop: s[0] === 'caret' }" :aria-label="s[0]"><Icon :n="s[0]" /></button>
        <button class="ratio">1:1<Icon n="caret" class="caret" /></button>
        <button aria-label="Workspace"><Icon n="gear" /></button>
        <button class="drop" aria-label="Workspace list"><Icon n="caret" /></button>
        <button aria-label="Annotation monitor"><Icon n="bigplus" /></button>
        <button class="units"><Icon n="ruler" />Decimal<Icon n="caret" class="caret" /></button>
        <button v-for="(s, i) in statusEnd" :key="'e' + i" class="tail" :class="{ on: s[1], drop: s[0] === 'caret' }" :aria-label="s[0]"><Icon :n="s[0]" /></button>
      </div>
    </footer>
  </div>
</template>

<style>
body { background: #000; }
</style>

<style scoped>
* { box-sizing: border-box; }
.app { display: flex; flex-direction: column; min-height: 100vh; padding-top: 7px; padding-bottom: 7px; background: #000; color: #e6e9ed; font: 500 8px/10px Lato, "Open Sans", sans-serif; }
button, select, input { margin: 0; padding: 0; border: 0; border-radius: 0; background: none; color: inherit; font: inherit; }
button { display: flex; align-items: center; justify-content: center; white-space: nowrap; }
svg { flex: none; width: 12px; height: 12px; }
.caret { width: 7px; height: 7px; }
.edge { height: 4px; background: #455054; }

.head { display: grid; grid-template-columns: 28px 1fr; background: #222a33; }
.logo { grid-row: span 2; align-items: flex-start; padding-top: 3px; padding-right: 6px; }
.logo svg { width: 21px; height: 21px; }
.titlebar { display: flex; align-items: center; height: 17px; }
.quick { display: flex; align-items: center; }
.quick button { width: 16px; }
.title { display: flex; flex: 1; justify-content: center; gap: 8px; color: #eef0f3; }
.account { display: flex; align-items: center; width: 384px; color: #d5dade; }
.find { width: 120px; height: 12px; margin-left: 2px; padding: 0 2px; background: #454e5c; }
.find::placeholder { color: #b4bac4; font-style: italic; opacity: 1; }
.account button { min-width: 16px; }
.account .user { justify-content: flex-start; gap: 3px; width: 71px; margin-left: 1px; }
.account .trial { gap: 2px; width: 28px; height: 14px; margin: 0 2px 0 4px; background: #1b93cf; color: #fff; }
.account .help { margin-left: 4px; padding-left: 4px; border-left: 1px solid #39424c; }
.win { display: flex; flex: 1; justify-content: flex-end; }
.win svg { width: 11px; height: 11px; }
.menu { display: flex; height: 13px; color: #c0c6cd; }
.menu button { padding: 0 7px; }
.menu button:nth-child(n + 6) { padding-right: 6px; }
.menu .on { width: 36px; background: #3c4651; color: #fff; }
.menu .pill { gap: 1px; padding-left: 13px; color: #fff; }
.menu .pill svg:first-child { height: 10px; }

.ribbon { display: grid; grid-template-columns: 131px 53px 115px 63px 97px 50px 98px 137px 115px 183px 46px 1fr; background: #3c4651; border-bottom: 1px solid #2e3740; }
.panel { display: flex; flex-direction: column; border-right: 1px solid #333c46; }
.panel:last-child { border-right: 0; }
.body { display: flex; height: 53px; padding-top: 3px; }
h2 { position: relative; display: flex; align-items: center; justify-content: center; gap: 3px; height: 12px; margin: 0; font: inherit; }
h2 .caret { width: 9px; height: 9px; }
.launch { position: absolute; right: 2px; width: 7px; height: 7px; }
.big { display: flex; flex-direction: column; align-items: center; justify-content: flex-start; width: 40px; height: 48px; padding-top: 1px; line-height: 10px; text-align: center; }
.big svg:first-child { width: 24px; height: 24px; margin-bottom: 1px; }
.big.on { background: #4c6480; outline: 1px solid #6f9cc3; outline-offset: -1px; }
.stack { display: flex; flex-direction: column; }
.item { display: flex; justify-content: flex-start; gap: 3px; height: 16px; }
.tool { width: 16px; height: 16px; }
.tool.on { background: #3a6184; outline: 1px solid #6f9cc3; outline-offset: -1px; }
.tools { display: grid; grid-auto-rows: 16px; }
.tools .tool { width: auto; }
.two { grid-template-columns: 18px 18px; }
.three { grid-template-columns: 17px 17px 18px; }
.four { grid-template-columns: repeat(4, 17px); }
.five { grid-template-columns: repeat(5, 18px); }
.carets { display: flex; flex-direction: column; align-items: center; justify-content: space-around; height: 48px; }
.carets.end { justify-content: flex-end; padding-bottom: 9px; }
.modeling .big { width: 38px; }
.modeling .stack { margin-left: 3px; }
.mesh .big { width: 35px; }
.mesh h2 { padding-right: 8px; }
.solids .tools { margin-left: 1px; }
.draw .tools { margin-left: 2px; }
.modify .carets { margin-left: -1px; }
.section .body, .section .big { width: 100%; }
.section h2 { gap: 2px; padding-right: 8px; }
.coords .body { gap: 2px; padding-left: 5px; }
.coords .item { gap: 2px; width: 22px; }
.field { display: flex; align-items: center; gap: 1px; height: 14px; margin: 1px 0; padding: 0 1px; background: #4a5564; }
.field select { flex: 1; min-width: 0; appearance: none; }
.view .body { padding: 3px 2px 0 1px; }
.view .stack { width: 100%; }
.view .item { margin-left: 1px; }
.selection .body { padding-left: 2px; }
.selection .big { width: 43px; }
.selection .big.on { width: 31px; }
.selection .carets { margin-left: -9px; }
.layers .big { width: 43px; }
.layers .stack { flex: 1; padding-right: 1px; }
.layers .field { gap: 2px; padding: 0 2px; }
.layers .field select { padding-left: 2px; }
.row { display: flex; }
.row .item { margin-left: 1px; }
.groups .big { width: 29px; }
.base .big { width: 43px; padding-top: 4px; }
.base h2 { justify-content: flex-start; padding-left: 4px; }
.base h2 .launch { position: static; margin-left: 1px; }

.files { display: flex; align-items: flex-end; height: 19px; background: #222a33; border-bottom: 1px solid #3f4952; color: #c9ced4; }
.file { display: flex; justify-content: space-between; height: 15px; padding: 0 7px 1px; background: #2c353f; clip-path: polygon(5px 0, calc(100% - 5px) 0, 100% 100%, 0 100%); }
.file svg { width: 9px; height: 9px; }
.start { justify-content: flex-start; width: 82px; margin-left: 11px; }
div.file { width: 83px; }
.file.on { background: #3c4651; color: #fff; }
.add { width: 24px; height: 15px; }

.viewport { position: relative; flex: 1; min-height: 320px; overflow: hidden; background: #212830; }
.scene { position: absolute; inset: 0; width: 100%; height: 100%; }
.top { position: relative; display: flex; align-items: flex-start; padding-top: 2px; }
.vlabel { width: 231px; padding-top: 3px; }
.cmdtools { display: flex; align-items: center; gap: 1px; width: 39px; height: 16px; color: #c3c9ce; }
.cmdtools svg { width: 10px; height: 10px; }
.cmdtools button:last-child { margin-left: 6px; }
.command { width: 58%; max-width: 733px; font: 8px/10px "Liberation Mono", monospace; }
.cmdbar { display: flex; align-items: center; height: 16px; margin-bottom: 2px; padding: 0 2px; background: #b9bebd; color: #42494d; }
.cmdbar input { flex: 1; margin-left: 3px; }
.cmdbar input::placeholder { color: #6c7375; font-style: italic; opacity: 1; }
.up { transform: rotate(180deg); }
.command p { height: 13px; margin: 0; padding-left: 4px; padding-top: 1px; color: #e1e4e4; }
.command p span { display: inline-block; height: 11px; padding: 0 1px; background: #50565a; white-space: nowrap; }
.command .old { color: #b9bdbe; }
.command .now { color: #fff; }
.docwin { display: flex; gap: 3px; margin-left: auto; padding-top: 4px; padding-right: 2px; color: #fff; }
.docwin svg { width: 10px; height: 10px; }
.cube { position: absolute; top: 46px; right: 6px; width: 92px; }
.cube svg { display: block; width: 92px; height: 72px; }
.cube button { width: 46px; height: 12px; margin: 13px 0 0 23px; padding-left: 3px; justify-content: flex-start; border: 1px solid #b0b4b5; border-radius: 3px; background: #929899; color: #53595c; font-weight: 400; }
.navbar { position: absolute; top: 159px; right: 0; display: flex; flex-direction: column; justify-content: space-around; width: 21px; height: 142px; padding: 8px 0; border-radius: 3px 0 0 3px; background: #60676b; color: #485055; }
.navbar svg { width: 15px; height: 15px; }

.foot { display: flex; align-items: flex-start; justify-content: space-between; height: 18px; border-top: 1px solid #343d46; background: #222a33; }
.layouts { display: flex; height: 12px; padding-left: 5px; gap: 2px; }
.layouts button { padding: 0 7px; background: #2c353f; clip-path: polygon(0 0, 100% 0, calc(100% - 5px) 100%, 5px 100%); }
.layouts button:last-child { padding: 0 4px; }
.layouts svg { width: 10px; height: 10px; }
.layouts .on { background: #414b55; color: #fff; font-weight: 700; }
.status { display: flex; align-items: center; height: 16px; margin-top: 1px; background: #2c343d; }
.status button { width: 16px; height: 15px; border-right: 1px solid transparent; background-clip: padding-box; }
.status .drop { width: 12px; border: 0; }
.status .drop svg { width: 9px; height: 9px; }
.status .on { background-color: #5888b1; color: #fff; }
.status .tail { width: 17px; }
.status .tail.drop { width: 11px; }
.xyz { padding: 2px 6px; border-right: 1px solid #1f272f; }
.status .space { width: 33px; }
.status .ratio { width: 23px; gap: 2px; }
.status .units { gap: 4px; width: 70px; }
.status .units .caret { margin-left: 5px; }
</style>
